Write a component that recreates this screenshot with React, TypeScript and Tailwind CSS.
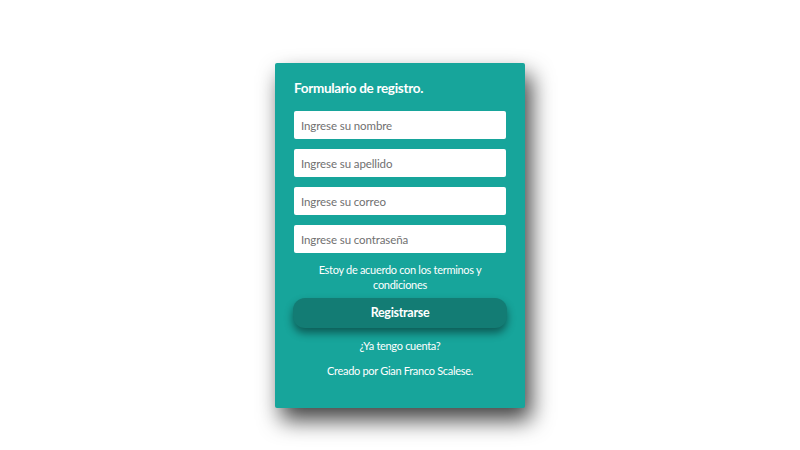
import React from 'react';

const fields = [
  { placeholder: 'Ingrese su nombre', type: 'text' },
  { placeholder: 'Ingrese su apellido', type: 'text' },
  { placeholder: 'Ingrese su correo', type: 'email' },
  { placeholder: 'Ingrese su contraseña', type: 'password' },
];

const App: React.FC = () => {
  return (
    <div className="w-[800px] h-[450px] bg-white flex justify-center pt-[63px] font-['Lato','Liberation_Sans',sans-serif]">
      <form
        className="w-[250px] h-[345px] bg-[#17a59b] rounded-[2px] px-[19px] pt-[16px] flex flex-col shadow-[6px_12px_22px_rgba(0,0,0,0.75)]"
        onSubmit={(e) => e.preventDefault()}
      >
        <h1 className="text-white font-bold text-[13.5px] tracking-[-0.3px] leading-[18px] mb-[14px]">
          Formulario de registro.
        </h1>

        <div className="flex flex-col gap-[10px]">
          {fields.map((f) => (
            <input
              key={f.placeholder}
              type={f.type}
              placeholder={f.placeholder}
              className="w-full h-[28px] bg-white rounded-[2px] px-[7px] text-[11.5px] tracking-[-0.1px] text-gray-700 placeholder:text-[#707070] outline-none"
            />
          ))}
        </div>

        <p className="text-white text-[11px] tracking-[-0.3px] leading-[15px] text-center mt-[9px]">
          Estoy de acuerdo con los terminos y
          <br />
          condiciones
        </p>

        <button
          type="submit"
          className="mt-[6px] h-[30px] w-[214px] -mx-[1px] rounded-[12px] bg-[#137c74] text-white font-bold text-[12.5px] tracking-[-0.3px] shadow-[0_5px_8px_rgba(0,0,0,0.45)]"
        >
          Registrarse
        </button>

        <a href="#" className="text-white text-[11px] tracking-[-0.3px] text-center mt-[10px] leading-[15px]">
          ¿Ya tengo cuenta?
        </a>

        <p className="text-white text-[11px] tracking-[-0.3px] text-center mt-[10px] leading-[15px]">
          Creado por Gian Franco Scalese.
        </p>
      </form>
    </div>
  );
};

export default App;
